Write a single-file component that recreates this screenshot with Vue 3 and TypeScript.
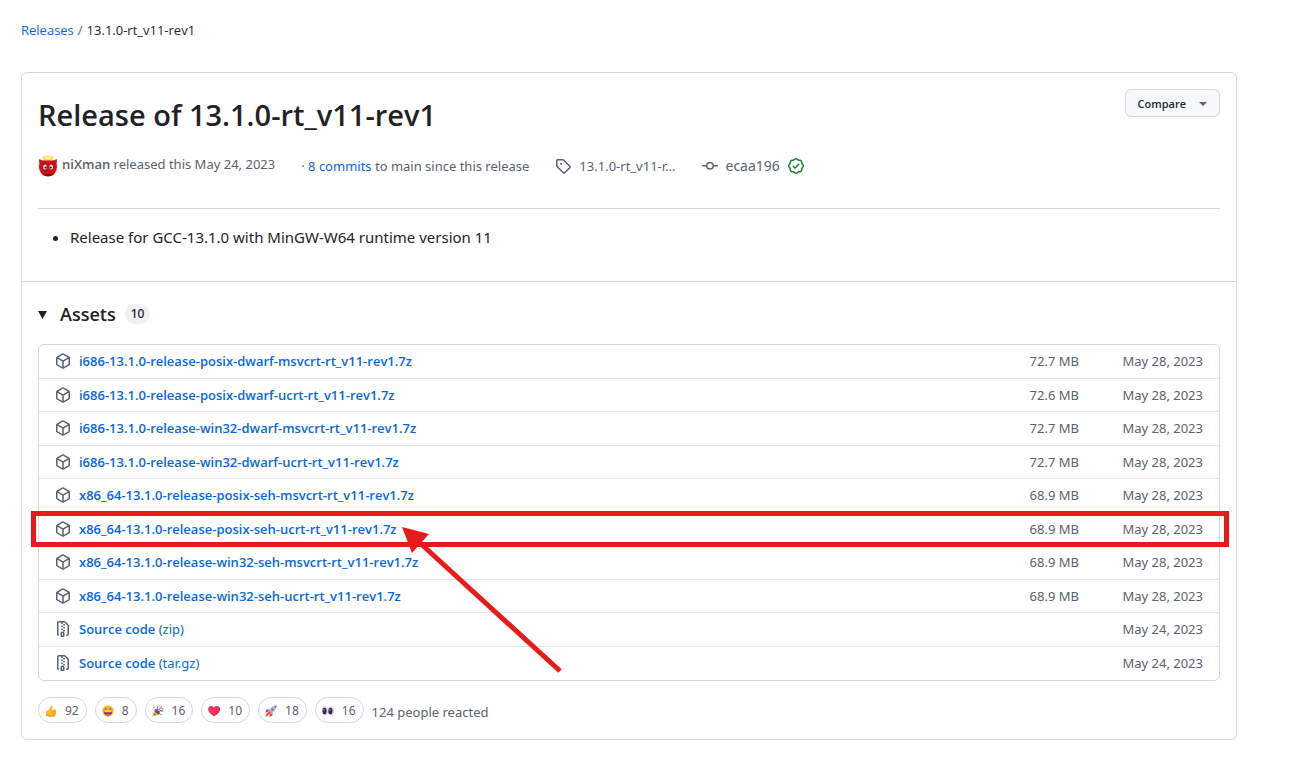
<script setup lang="ts">
interface Asset {
  name: string
  format?: string
  size?: string
  date: string
  marked?: boolean
}

interface Reaction {
  kind: 'thumb' | 'laugh' | 'party' | 'heart' | 'rocket' | 'eyes'
  count: number
}

const assets: Asset[] = [
  { name: 'i686-13.1.0-release-posix-dwarf-msvcrt-rt_v11-rev1.7z', size: '72.7 MB', date: 'May 28, 2023' },
  { name: 'i686-13.1.0-release-posix-dwarf-ucrt-rt_v11-rev1.7z', size: '72.6 MB', date: 'May 28, 2023' },
  { name: 'i686-13.1.0-release-win32-dwarf-msvcrt-rt_v11-rev1.7z', size: '72.7 MB', date: 'May 28, 2023' },
  { name: 'i686-13.1.0-release-win32-dwarf-ucrt-rt_v11-rev1.7z', size: '72.7 MB', date: 'May 28, 2023' },
  { name: 'x86_64-13.1.0-release-posix-seh-msvcrt-rt_v11-rev1.7z', size: '68.9 MB', date: 'May 28, 2023' },
  { name: 'x86_64-13.1.0-release-posix-seh-ucrt-rt_v11-rev1.7z', size: '68.9 MB', date: 'May 28, 2023', marked: true },
  { name: 'x86_64-13.1.0-release-win32-seh-msvcrt-rt_v11-rev1.7z', size: '68.9 MB', date: 'May 28, 2023' },
  { name: 'x86_64-13.1.0-release-win32-seh-ucrt-rt_v11-rev1.7z', size: '68.9 MB', date: 'May 28, 2023' },
  { name: 'Source code', format: '(zip)', date: 'May 24, 2023' },
  { name: 'Source code', format: '(tar.gz)', date: 'May 24, 2023' },
]

const reactions: Reaction[] = [
  { kind: 'thumb', count: 92 },
  { kind: 'laugh', count: 8 },
  { kind: 'party', count: 16 },
  { kind: 'heart', count: 10 },
  { kind: 'rocket', count: 18 },
  { kind: 'eyes', count: 16 },
]

const icons = {
  package:
    'm8.878.392 5.25 3.045c.54.314.872.89.872 1.514v6.098a1.75 1.75 0 0 1-.872 1.514l-5.25 3.045a1.75 1.75 0 0 1-1.756 0l-5.25-3.045A1.75 1.75 0 0 1 1 11.049V4.951c0-.624.332-1.201.872-1.514L7.122.392a1.75 1.75 0 0 1 1.756 0ZM7.875 1.69l-4.63 2.685L8 7.133l4.755-2.758-4.63-2.685a.248.248 0 0 0-.25 0ZM2.5 5.677v5.372c0 .09.047.171.125.216l4.625 2.683V8.432Zm6.25 8.271 4.625-2.683a.25.25 0 0 0 .125-.216V5.677L8.75 8.432Z',
  zip: 'M3.5 1.75v11.5c0 .09.048.173.126.217a.75.75 0 0 1-.752 1.298A1.748 1.748 0 0 1 2 13.25V1.75C2 .784 2.784 0 3.75 0h5.586c.464 0 .909.185 1.237.513l2.914 2.914c.329.328.513.773.513 1.237v8.586A1.75 1.75 0 0 1 12.25 15h-.5a.75.75 0 0 1 0-1.5h.5a.25.25 0 0 0 .25-.25V4.664a.25.25 0 0 0-.073-.177L9.513 1.573a.25.25 0 0 0-.177-.073H7.25a.75.75 0 0 1 0 1.5h-.5a.75.75 0 0 1 0-1.5h-3a.25.25 0 0 0-.25.25Zm3.75 8.75h.5c.966 0 1.75.784 1.75 1.75v3a.75.75 0 0 1-.75.75h-2.5a.75.75 0 0 1-.75-.75v-3c0-.966.784-1.75 1.75-1.75ZM6 5.25a.75.75 0 0 1 .75-.75h.5a.75.75 0 0 1 0 1.5h-.5A.75.75 0 0 1 6 5.25Zm.75 2.25h.5a.75.75 0 0 1 0 1.5h-.5a.75.75 0 0 1 0-1.5Zm1.25-.75A.75.75 0 0 1 8.75 6h.5a.75.75 0 0 1 0 1.5h-.5A.75.75 0 0 1 8 6.75ZM8.75 3h.5a.75.75 0 0 1 0 1.5h-.5a.75.75 0 0 1 0-1.5ZM8 9.75A.75.75 0 0 1 8.75 9h.5a.75.75 0 0 1 0 1.5h-.5A.75.75 0 0 1 8 9.75Zm-1 2.5v2.25h1v-2.25a.25.25 0 0 0-.25-.25h-.5a.25.25 0 0 0-.25.25Z',
  tag: 'M1 7.775V2.75C1 1.784 1.784 1 2.75 1h5.025c.464 0 .91.184 1.238.513l6.25 6.25a1.75 1.75 0 0 1 0 2.474l-5.026 5.026a1.75 1.75 0 0 1-2.474 0l-6.25-6.25A1.752 1.752 0 0 1 1 7.775Zm1.5 0c0 .066.026.13.073.177l6.25 6.25a.25.25 0 0 0 .354 0l5.025-5.025a.25.25 0 0 0 0-.354l-6.25-6.25a.25.25 0 0 0-.177-.073H2.75a.25.25 0 0 0-.25.25ZM6 5a1 1 0 1 1 0 2 1 1 0 0 1 0-2Z',
  commit:
    'M11.93 8.5a4.002 4.002 0 0 1-7.86 0H.75a.75.75 0 0 1 0-1.5h3.32a4.002 4.002 0 0 1 7.86 0h3.32a.75.75 0 0 1 0 1.5Zm-1.43-.75a2.5 2.5 0 1 0-5 0 2.5 2.5 0 0 0 5 0Z',
  verified:
    'm9.585.52.929.68c.153.112.331.186.518.215l1.138.175a2.678 2.678 0 0 1 2.24 2.24l.174 1.139c.029.187.103.365.215.518l.68.928a2.677 2.677 0 0 1 0 3.17l-.68.928a1.174 1.174 0 0 0-.215.518l-.175 1.138a2.678 2.678 0 0 1-2.241 2.241l-1.138.175a1.17 1.17 0 0 0-.518.215l-.928.68a2.677 2.677 0 0 1-3.17 0l-.928-.68a1.174 1.174 0 0 0-.518-.215L3.83 14.41a2.678 2.678 0 0 1-2.24-2.24l-.175-1.138a1.17 1.17 0 0 0-.215-.518l-.68-.928a2.677 2.677 0 0 1 0-3.17l.68-.928c.112-.153.186-.331.215-.518l.175-1.14a2.678 2.678 0 0 1 2.24-2.24l1.139-.175c.187-.029.365-.103.518-.215l.928-.68a2.677 2.677 0 0 1 3.17 0ZM7.303 1.728l-.927.68a2.67 2.67 0 0 1-1.18.489l-1.137.174a1.179 1.179 0 0 0-.987.987l-.174 1.136a2.677 2.677 0 0 1-.489 1.18l-.68.928a1.18 1.18 0 0 0 0 1.394l.68.927c.256.348.424.753.489 1.18l.174 1.137c.078.509.478.909.987.987l1.136.174a2.67 2.67 0 0 1 1.18.489l.928.68c.414.305.979.305 1.394 0l.927-.68a2.67 2.67 0 0 1 1.18-.489l1.137-.174a1.18 1.18 0 0 0 .987-.987l.174-1.136a2.67 2.67 0 0 1 .489-1.18l.68-.928a1.176 1.176 0 0 0 0-1.394l-.68-.927a2.686 2.686 0 0 1-.489-1.18l-.174-1.137a1.179 1.179 0 0 0-.987-.987l-1.136-.174a2.677 2.677 0 0 1-1.18-.489l-.928-.68a1.176 1.176 0 0 0-1.394 0ZM11.28 6.78l-3.75 3.75a.75.75 0 0 1-1.06 0L4.72 8.78a.751.751 0 0 1 .018-1.042.751.751 0 0 1 1.042-.018L7 8.94l3.22-3.22a.751.751 0 0 1 1.042.018.751.751 0 0 1 .018 1.042Z',
}
</script>

<template>
  <main class="page">
    <nav class="crumbs" aria-label="Breadcrumb">
      <a href="#releases">Releases</a>
      <span class="sep">/</span>
      <a href="#release" class="current" aria-current="page">13.1.0-rt_v11-rev1</a>
    </nav>

    <section class="card">
      <div class="overview">
        <header class="head">
          <h1>Release of 13.1.0-rt_v11-rev1</h1>
          <button type="button" class="compare">
            Compare
            <svg width="8" height="4" viewBox="0 0 8 4" aria-hidden="true"><path d="M0 0h8L4 4z" /></svg>
          </button>
        </header>

        <div class="meta">
          <div class="author">
            <svg class="avatar" viewBox="0 0 20 22" aria-hidden="true">
              <ellipse cx="10" cy="11" rx="9.500" ry="10.500" fill="#fff" stroke="#dde2e6" />
              <path d="M1.500 4C.8 6 1.200 7 1.500 8c-.8 3-.5 6 .7 8.500C4 20 6.500 21.200 10 21.200s6-1.200 7.800-4.700C19 14 19.300 11 18.500 8c.3-1 .7-2 0-4-1 1-2 1.200-3.500 1.200H5C3.500 5.200 2.500 5 1.500 4Z" fill="#c9131b" />
              <path d="M3 17c3.500 3 10.500 3 14 0-1.500 3-4 4.200-7 4.200S4.500 20 3 17Z" fill="#850b10" />
              <path d="M5 8c1 2 1 3-1 5 1 1 2 3 5 3M15 8c-1 2-1 3 1 5" fill="none" stroke="#980b12" />
              <path d="M5.500 1.500h9l1 3.700h-11Z" fill="#f4e63a" />
              <path d="M6.500 3h7" stroke="#fffbc0" />
              <ellipse cx="7" cy="12" rx="1.800" ry="2.500" fill="#f4e9e9" />
              <ellipse cx="13.200" cy="12" rx="1.800" ry="2.500" fill="#f4e9e9" />
              <circle cx="7.600" cy="12.500" r="1.100" fill="#261010" />
              <circle cx="12.700" cy="12.500" r="1.100" fill="#261010" />
            </svg>
            <span><a href="#nixman" class="user">niXman</a> released this May 24, 2023</span>
          </div>
          <div class="since">· <a href="#commits">8 commits</a> to main since this release</div>
          <a href="#tag" class="ref">
            <svg width="16" height="16" viewBox="0 0 16 16" aria-hidden="true"><path :d="icons.tag" /></svg>
            <span>13.1.0-rt_v11-r...</span>
          </a>
          <div class="ref-group">
            <a href="#commit" class="ref">
              <svg width="16" height="16" viewBox="0 0 16 16" aria-hidden="true"><path :d="icons.commit" /></svg>
              <span class="hash">ecaa196</span>
            </a>
            <button type="button" class="verified" aria-label="Verified">
              <svg width="16" height="16" viewBox="0 0 16 16" aria-hidden="true"><path :d="icons.verified" /></svg>
            </button>
          </div>
        </div>

        <ul class="notes">
          <li>Release for GCC-13.1.0 with MinGW-W64 runtime version 11</li>
        </ul>
      </div>

      <div class="bottom">
        <details open>
          <summary>
            <svg width="10" height="9" viewBox="0 0 10 9" aria-hidden="true"><path d="M0 1h9L4.500 9z" /></svg>
            <h2>Assets</h2>
            <span class="counter">{{ assets.length }}</span>
          </summary>
          <ul class="assets">
            <li v-for="asset in assets" :key="asset.name + (asset.format ?? '')" :class="{ marked: asset.marked }">
              <svg width="16" height="16" viewBox="0 0 16 16" aria-hidden="true">
                <path :d="asset.format ? icons.zip : icons.package" />
              </svg>
              <a href="#download" class="file">
                <b>{{ asset.name }}</b>
                <template v-if="asset.format">&nbsp;{{ asset.format }}</template>
              </a>
              <span class="size">{{ asset.size }}</span>
              <span class="date">{{ asset.date }}</span>
              <svg v-if="asset.marked" class="arrow" width="170" height="150" viewBox="0 0 170 150" aria-hidden="true">
                <path d="M18 16 158 144" fill="none" stroke="#e81b1b" stroke-width="5" />
                <path d="M0 0 27 7 10 26Z" />
              </svg>
            </li>
          </ul>
        </details>

        <div class="reactions">
          <button v-for="r in reactions" :key="r.kind" type="button" class="pill">
            <svg width="12" height="12" viewBox="0 0 12 12" aria-hidden="true">
              <g v-if="r.kind === 'thumb'">
                <path d="M1 6.200 3.600 5 5.800 1.200C6 .2 7.600.200 7.500 1.800L7 4.600h3c1 0 1.300 1 .8 1.700.6.6.5 1.300 0 1.800.4.700.1 1.300-.4 1.700.2 1-.4 1.700-1.300 1.700H5C3.500 11.500 3 11 1 11Z" fill="#fcba28" />
                <path d="M7.500 6.400h3M7.500 8.200h3M7.300 10h2.800" stroke="#e08a1c" stroke-width=".6" />
                <path d="M1 9.500c2 0 3 .8 4.500 1h4v1H5C3.500 11.500 3 11 1 11Z" fill="#ed9a22" />
              </g>
              <g v-else-if="r.kind === 'laugh'">
                <circle cx="6" cy="6" r="5.700" fill="#fdb52a" />
                <path d="M1.800 6.200h8.400C10 9 8.300 10.600 6 10.600S2 9 1.800 6.200Z" fill="#7d2158" />
                <path d="M2.400 6.300h7.200l-.3 1H2.700Z" fill="#fff" />
                <path d="M3.400 9.300c1.500-1 3.700-1 5.200 0-1.400 1.500-3.800 1.500-5.200 0Z" fill="#e93fa0" />
                <path d="m2.800 3 1.700.9-1.700.9M9.200 3l-1.700.9 1.700.9" fill="none" stroke="#7a4a24" stroke-width=".7" />
              </g>
              <g v-else-if="r.kind === 'party'">
                <path d="m.4 11.600 2.700-7.200 4.600 4.500Z" fill="#f6b32c" />
                <path d="m1.700 8.400 2.200 2.200M2.600 6l4 3.500" stroke="#51445e" stroke-width=".9" />
                <ellipse cx="5.400" cy="6.600" rx="1.300" ry="3.200" transform="rotate(-45 5.400 6.600)" fill="#5a4a6a" />
                <path d="M5.500 5.500C4.700 4 5 2.500 6.200 1.200" fill="none" stroke="#2897e8" stroke-width="1.200" />
                <path d="M6.500 6.500C8 5 9.500 5.400 11.300 6.200" fill="none" stroke="#ee3c68" stroke-width="1.200" />
                <path d="m6.200 5.200 3.900-3.900" stroke="#a86bd4" stroke-width="1.100" />
                <circle cx="2" cy="2.200" r=".8" fill="#ee3c68" />
                <circle cx="10.800" cy="3.800" r=".7" fill="#2897e8" />
                <circle cx="9" cy="9.500" r=".8" fill="#38b4dd" />
                <circle cx="8" cy="1" r=".6" fill="#f6b32c" />
              </g>
              <g v-else-if="r.kind === 'heart'">
                <path d="M6 11.300C2.500 9 0 6.700.1 4 .2.500 4.500-.1 6 2.500 7.500-.1 11.800.5 11.900 4 12 6.700 9.500 9 6 11.300Z" fill="#f8315f" />
                <path d="M9.500 1.600c1.800 1 2 3.400.4 5.300C9 8 7.500 9.500 6 10.300v1C9.500 9 12 6.700 11.900 4c0-1.300-1-2.300-2.400-2.400Z" fill="#d01f50" />
              </g>
              <g v-else-if="r.kind === 'rocket'">
                <path d="m4.500 4.200-3.300.6L.3 7.500l3-.2ZM7.800 7.500l-.6 3.300-2.700.9.200-3Z" fill="#f0386b" />
                <path d="M.4 11.600c0-2 .5-3 1.700-3.300l1.600 1.600C3.400 11.100 2.400 11.600.4 11.600Z" fill="#fd932f" />
                <path d="M2.800 7.200C4.500 3.500 7 1.300 9.500 1l1.500 1.500C10.700 5 8.500 7.500 4.800 9.200Z" fill="#b6b1cb" />
                <path d="M8.800 1.100 11.800.2 10.900 3.200Z" fill="#f0386b" />
                <circle cx="7.600" cy="4.400" r="1.300" fill="#389ee5" />
                <path d="m2.200 9.800 3-3" stroke="#d92356" stroke-width="1.300" />
              </g>
              <g v-else>
                <ellipse cx="3" cy="6" rx="2.900" ry="4.500" fill="#d9c8e3" />
                <ellipse cx="9" cy="6" rx="2.900" ry="4.500" fill="#d9c8e3" />
                <ellipse cx="2.500" cy="6" rx="2" ry="3.200" fill="#352640" />
                <ellipse cx="8.400" cy="6" rx="2" ry="3.200" fill="#352640" />
                <circle cx="2" cy="4.800" r=".6" fill="#fff" />
                <circle cx="7.900" cy="4.800" r=".6" fill="#fff" />
              </g>
            </svg>
            {{ r.count }}
          </button>
          <span class="people">124 people reacted</span>
        </div>
      </div>
    </section>
  </main>
</template>

<style>
body {
  margin: 0;
  background: #fff;
}
</style>

<style scoped>
.page {
  padding: 19px 55px 38px 21px;
  font: 13px/22px "Noto Sans", "Open Sans", sans-serif;
  color: #1f2328;
}
a {
  color: #0969da;
  text-decoration: none;
}
svg {
  display: block;
  flex: none;
  fill: currentColor;
}
button {
  font: inherit;
  cursor: pointer;
}
ul {
  list-style: none;
  margin: 0;
  padding: 0;
}
h1,
h2,
.crumbs,
.compare,
.user,
.file b {
  font-family: "Open Sans", "Noto Sans", sans-serif;
}
.crumbs {
  display: flex;
  gap: 4px;
  margin-bottom: 31px;
}
.sep {
  color: #59636e;
}
.crumbs .current {
  color: #1f2328;
}
.card {
  border: 1px solid #d1d9e0;
  border-radius: 6px;
}
.overview {
  padding: 16px 16px 32px;
  border-bottom: 1px solid #d1d9e0;
}
.head {
  display: flex;
  justify-content: space-between;
  align-items: flex-start;
}
h1 {
  margin: 0;
  font-size: 29px;
  line-height: 52px;
  font-weight: 600;
}
.compare {
  display: flex;
  align-items: center;
  gap: 13px;
  box-sizing: border-box;
  height: 28px;
  padding: 1px 12px 0;
  border: 1px solid #d1d9e0;
  border-radius: 6px;
  background: #f6f8fa;
  color: #25292e;
  font-size: 11px;
  font-weight: 600;
}
.compare svg {
  color: #59636e;
}
.meta {
  display: flex;
  align-items: center;
  gap: 26px;
  padding: 14px 0 31px;
  border-bottom: 1px solid #d1d9e0;
  color: #59636e;
}
.author {
  display: flex;
  align-items: flex-start;
  gap: 4px;
}
.author > span {
  line-height: 18px;
}
.avatar {
  width: 20px;
  height: 22px;
}
.user {
  color: #59636e;
  font-weight: 600;
}
.ref {
  display: flex;
  align-items: center;
  gap: 8px;
  color: #59636e;
}
.ref-group {
  display: flex;
  align-items: center;
  gap: 8px;
}
.hash {
  font-size: 14px;
}
.verified {
  padding: 0;
  border: 0;
  background: none;
  color: #1a7f37;
}
.notes {
  list-style: disc;
  margin-top: 16px;
  padding-left: 32px;
  font-size: 15px;
  line-height: 24px;
}
.bottom {
  padding: 16px;
}
summary {
  display: flex;
  align-items: center;
  height: 32px;
  margin-bottom: 14px;
  cursor: pointer;
}
h2 {
  margin: 0 9px 0 12px;
  font-size: 18px;
  line-height: 32px;
  font-weight: 600;
}
.counter {
  padding: 0 6px;
  border-radius: 10px;
  background: #eff1f3;
  font-size: 12px;
  line-height: 20px;
  font-weight: 500;
}
.assets {
  display: grid;
  grid-auto-rows: 1fr;
  min-height: 335px;
  border: 1px solid #d1d9e0;
  border-radius: 6px;
}
.assets li {
  position: relative;
  display: flex;
  align-items: center;
  padding: 0 16px;
  color: #59636e;
}
.assets li:not(:last-child) {
  border-bottom: 1px solid #dce2e8;
}
.file {
  flex: 1;
  margin-left: 8px;
}
.file b {
  font-weight: 600;
}
.date {
  width: 124px;
  text-align: right;
}
.marked {
  z-index: 1;
}
.marked::after {
  content: "";
  position: absolute;
  inset: -2px -10px -2px -8px;
  border: 5px solid #e81b1b;
  pointer-events: none;
}
.arrow {
  position: absolute;
  left: 363px;
  top: 14px;
  color: #e81b1b;
  pointer-events: none;
}
.reactions {
  display: flex;
  flex-wrap: wrap;
  align-items: center;
  gap: 8px;
  margin-top: 16px;
}
.pill {
  display: flex;
  align-items: center;
  gap: 8px;
  box-sizing: border-box;
  height: 26px;
  padding: 2px 7px 0 6px;
  border: 1px solid #d1d9e0;
  border-radius: 13px;
  background: #fff;
  color: #59636e;
  font-size: 12px;
}
.people {
  padding-top: 4px;
  color: #59636e;
}
</style>
